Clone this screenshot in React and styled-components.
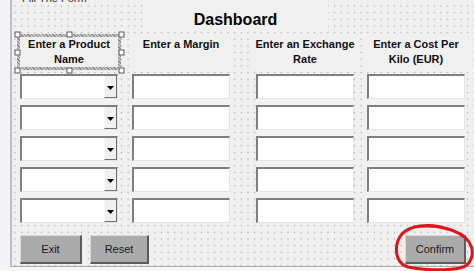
import React from 'react'
import styled, { createGlobalStyle } from 'styled-components'

const Global = createGlobalStyle`
  html, body {
    margin: 0;
    padding: 0;
    overflow: hidden;
    background: #f6f6f6;
  }
  #root {
    width: 474px;
    height: 271px;
  }
`

const columns = [
  { lines: ['Enter a Product', 'Name'], combo: true, selected: true, gap: 0 },
  { lines: ['Enter a Margin'], gap: 14 },
  { lines: ['Enter an Exchange', 'Rate'], gap: 26 },
  { lines: ['Enter a Cost Per', 'Kilo (EUR)'], gap: 13 },
]

const rows = [0, 1, 2, 3, 4]

function Handles() {
  const spots = [
    ['0%', '0%'], ['50%', '0%'], ['100%', '0%'],
    ['0%', '50%'], ['100%', '50%'],
    ['0%', '100%'], ['50%', '100%'], ['100%', '100%'],
  ]
  return spots.map(([x, y], i) => <Handle key={i} style={{ left: x, top: y }} />)
}

function Field({ combo }) {
  return (
    <Box>
      {combo && (
        <DropButton>
          <svg width="7" height="4" viewBox="0 0 7 4">
            <path d="M0 0 H7 L3.5 4 Z" fill="#000" />
          </svg>
        </DropButton>
      )}
    </Box>
  )
}

function App() {
  return (
    <>
      <Global />
      <Window>
        <Gutter />
        <Form>
          <Caption>Fill The Form</Caption>
          <TitleBar>
            <Title>Dashboard</Title>
          </TitleBar>
          <Columns>
            {columns.map((col, i) => (
              <Column key={i} $gap={col.gap}>
                <Header $selected={col.selected}>
                  <HeaderText>
                    {col.lines.map((l, j) => (
                      <span key={j}>{l}</span>
                    ))}
                  </HeaderText>
                  {col.selected && <Handles />}
                </Header>
                <Fields>
                  {rows.map((r) => (
                    <Field key={r} combo={col.combo} />
                  ))}
                </Fields>
              </Column>
            ))}
          </Columns>
          <ButtonRow>
            <Button $w={62}>Exit</Button>
            <Button $w={59}>Reset</Button>
            <ConfirmWrap>
              <Button $w={61}>Confirm</Button>
              <Scribble width="86" height="52" viewBox="0 0 86 52">
                <path
                  d="M24 5 C46 2 70 7 79 20 C86 31 81 44 70 46 C55 49 31 48 18 45 C8 42 5 32 7 22 C9 12 16 6 30 4 C40 3 50 4 57 7"
                  fill="none"
                  stroke="#e0141b"
                  strokeWidth="3"
                  strokeLinecap="round"
                />
              </Scribble>
            </ConfirmWrap>
          </ButtonRow>
        </Form>
      </Window>
    </>
  )
}

const Window = styled.div`
  display: flex;
  width: 474px;
  height: 267px;
  font-family: 'Liberation Sans', Arial, sans-serif;
  color: #111;
`

const Gutter = styled.div`
  width: 10px;
  background: #f4f4f4;
  border-right: 2px solid #b7bfcd;
`

const Form = styled.div`
  flex: 1;
  display: flex;
  flex-direction: column;
  background-color: #f0f0f0;
  background-image: radial-gradient(circle, #a3a3a3 0.6px, transparent 1px);
  background-size: 6.67px 6.67px;
  background-position: -0.3px 2.7px;
  border-bottom: 1px solid #a8a8a8;
  padding: 0 8px 0 8px;
`

const Caption = styled.div`
  height: 3px;
  margin-left: 2px;
  font-size: 11px;
  line-height: 11px;
  color: #333;
  position: relative;
  top: -7px;
`

const TitleBar = styled.div`
  margin-left: 123px;
  width: 185px;
  height: 19px;
  padding-top: 8px;
  background: #f0f0f0;
  display: flex;
  justify-content: center;
`

const Title = styled.div`
  font-size: 16px;
  font-weight: bold;
  line-height: 18px;
  color: #000;
`

const Columns = styled.div`
  display: flex;
  margin-top: 4px;
`

const Column = styled.div`
  width: 98px;
  margin-left: ${(p) => p.$gap}px;
  display: flex;
  flex-direction: column;
  gap: 4px;
`

const Header = styled.div`
  position: relative;
  margin: 0 -3px;
  height: 36px;
  box-sizing: border-box;
  padding: ${(p) => (p.$selected ? '3px' : '3px 3px 0')};
  background: ${(p) =>
    p.$selected
      ? 'repeating-linear-gradient(45deg, #8c8c8c 0 1px, #c4c4c4 1px 2.5px)'
      : '#f0f0f0'};
`

const HeaderText = styled.div`
  height: 100%;
  background: #f0f0f0;
  display: flex;
  flex-direction: column;
  align-items: center;
  padding-top: 0;
  font-size: 11px;
  font-weight: bold;
  line-height: 15px;
  white-space: nowrap;
  color: #111;
`

const Handle = styled.div`
  position: absolute;
  width: 4px;
  height: 4px;
  margin: -2px 0 0 -2px;
  background: #fff;
  border: 1px solid #555;
  box-sizing: content-box;
  transform: translate(-0.5px, -0.5px);
`

const Fields = styled.div`
  display: flex;
  flex-direction: column;
  gap: 6px;
  background: #f2f2f2;
`

const Box = styled.div`
  height: 25px;
  box-sizing: border-box;
  background: #fff;
  border-top: 2px solid #7f7f7f;
  border-left: 2px solid #7f7f7f;
  border-right: 1px solid #e4e4e4;
  border-bottom: 1px solid #e4e4e4;
  display: flex;
  justify-content: flex-end;
`

const DropButton = styled.div`
  width: 13px;
  box-sizing: border-box;
  background: #f0f0f0;
  border-left: 1px solid #f8f8f8;
  border-right: 1px solid #6f6f6f;
  border-bottom: 1px solid #6f6f6f;
  display: flex;
  align-items: center;
  justify-content: center;
  padding-top: 3px;
`

const ButtonRow = styled.div`
  display: flex;
  gap: 8px;
  margin-top: 12px;
`

const Button = styled.button`
  width: ${(p) => p.$w}px;
  height: 29px;
  background: #ababab;
  border: none;
  border-top: 1px solid #d9d9d9;
  border-left: 1px solid #d9d9d9;
  border-right: 2px solid #5c5c5c;
  border-bottom: 2px solid #5c5c5c;
  font-family: 'Liberation Sans', Arial, sans-serif;
  font-size: 11px;
  color: #1a1a1a;
  padding: 0;
`

const ConfirmWrap = styled.div`
  position: relative;
  margin-left: auto;
`

const Scribble = styled.svg`
  position: absolute;
  left: -15px;
  top: -13px;
  z-index: 2;
  overflow: visible;
`

export default App
